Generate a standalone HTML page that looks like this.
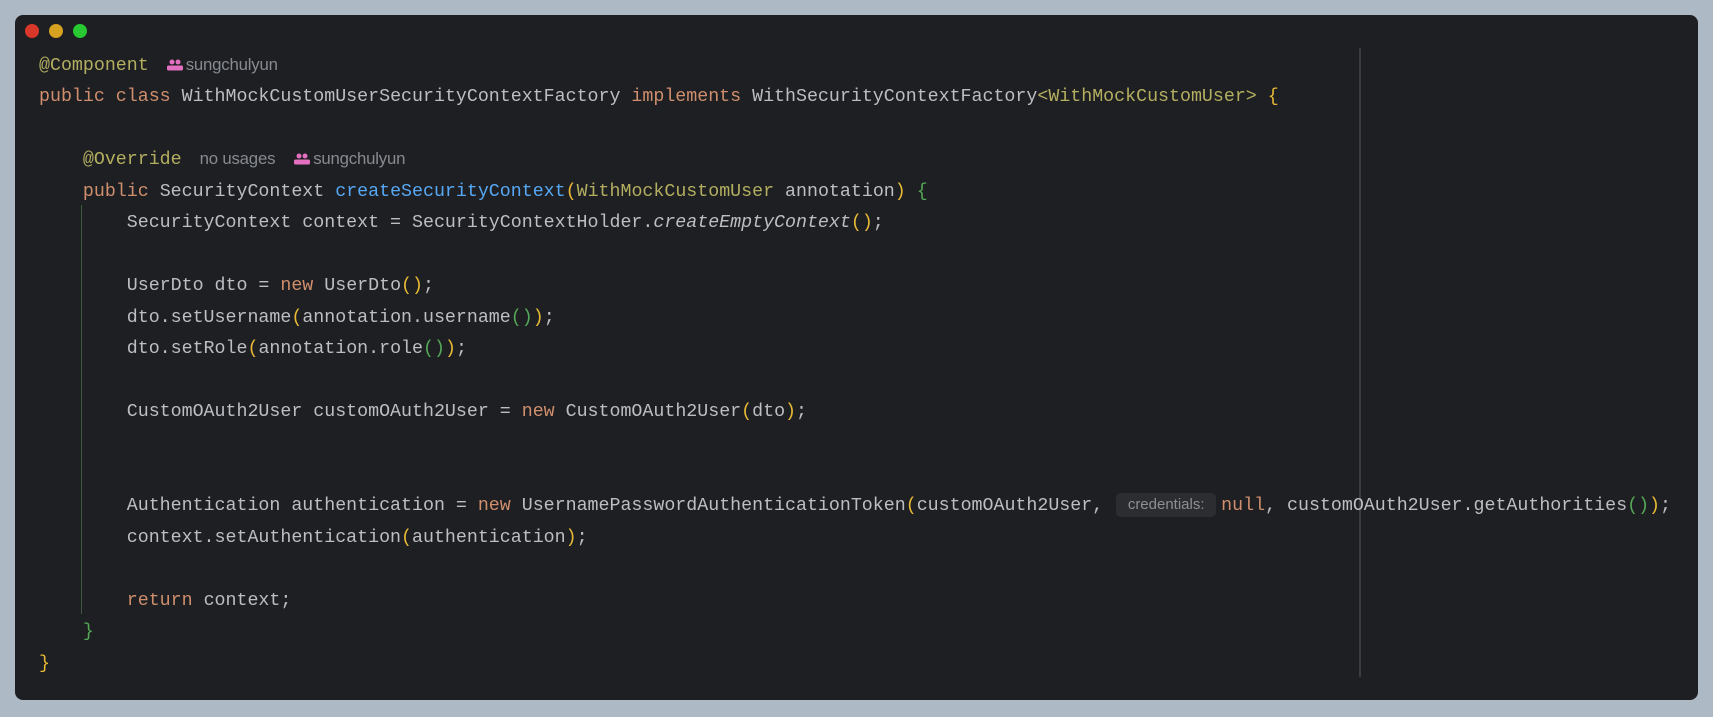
<!DOCTYPE html>
<html><head><meta charset="utf-8"><style>
html,body{margin:0;padding:0;}
body{width:1713px;height:717px;background:#adb9c5;position:relative;overflow:hidden;font-family:"Liberation Mono",monospace;}
.win{position:absolute;left:15px;top:15px;width:1683px;height:685px;background:#1e1f22;border-radius:8px;}
.dot{position:absolute;top:9px;width:14px;height:14px;border-radius:50%;}
.code{position:absolute;left:24px;top:36px;font-size:18.3px;line-height:31.45px;color:#bcbec4;white-space:pre;}
.k{color:#cf8e6d}.a{color:#b3ae60}.m{color:#56a8f5}.y{color:#e8ba36}.g{color:#54a857}.i{font-style:italic}
.h{font-family:"Liberation Sans",sans-serif;font-size:16.8px;line-height:10px;color:#868a91;letter-spacing:-0.2px;margin-left:7px;}
.inl{display:inline-block;font-family:"Liberation Sans",sans-serif;font-size:15px;color:#8c8f94;background:#2b2d30;border-radius:5px;width:100px;text-align:center;line-height:24px;margin:0 5px 0 2px;vertical-align:1px;}
.vl{position:absolute;left:1344px;top:33px;width:2px;height:629px;background:#393b40;}
.gl{position:absolute;left:66px;top:190px;width:1px;height:409px;background:#3d5a3e;}
svg{vertical-align:-1px;margin-right:3px}
</style></head><body>
<div class="win">
<div class="dot" style="left:10px;background:#d9372a"></div>
<div class="dot" style="left:34px;background:#d6a220"></div>
<div class="dot" style="left:58px;background:#28c931"></div>
<div class="vl"></div><div class="gl"></div>
<div class="code"><span class="a">@Component</span> <span class="h"><svg width="16" height="12" viewBox="0 0 16 12"><circle cx="5" cy="3" r="2.5" fill="#e26fbf"/><circle cx="11" cy="3" r="2.5" fill="#e26fbf"/><rect x="0" y="6.5" width="16" height="5" rx="1.5" fill="#e26fbf"/></svg>sungchulyun</span>
<span class="k">public class</span> WithMockCustomUserSecurityContextFactory <span class="k">implements</span> WithSecurityContextFactory<span class="a">&lt;WithMockCustomUser&gt;</span> <span class="y">{</span>

    <span class="a">@Override</span> <span class="h">no usages  <svg style="margin-left:10px" width="16" height="12" viewBox="0 0 16 12"><circle cx="5" cy="3" r="2.5" fill="#e26fbf"/><circle cx="11" cy="3" r="2.5" fill="#e26fbf"/><rect x="0" y="6.5" width="16" height="5" rx="1.5" fill="#e26fbf"/></svg>sungchulyun</span>
    <span class="k">public</span> SecurityContext <span class="m">createSecurityContext</span><span class="y">(</span><span class="a">WithMockCustomUser</span> annotation<span class="y">)</span> <span class="g">{</span>
        SecurityContext context = SecurityContextHolder.<span class="i">createEmptyContext</span><span class="y">()</span>;

        UserDto dto = <span class="k">new</span> UserDto<span class="y">()</span>;
        dto.setUsername<span class="y">(</span>annotation.username<span class="g">()</span><span class="y">)</span>;
        dto.setRole<span class="y">(</span>annotation.role<span class="g">()</span><span class="y">)</span>;

        CustomOAuth2User customOAuth2User = <span class="k">new</span> CustomOAuth2User<span class="y">(</span>dto<span class="y">)</span>;


        Authentication authentication = <span class="k">new</span> UsernamePasswordAuthenticationToken<span class="y">(</span>customOAuth2User, <span class="inl">credentials:</span><span class="k">null</span>, customOAuth2User.getAuthorities<span class="g">()</span><span class="y">)</span>;
        context.setAuthentication<span class="y">(</span>authentication<span class="y">)</span>;

        <span class="k">return</span> context;
    <span class="g">}</span>
<span class="y">}</span></div>
</div>
</body></html>
